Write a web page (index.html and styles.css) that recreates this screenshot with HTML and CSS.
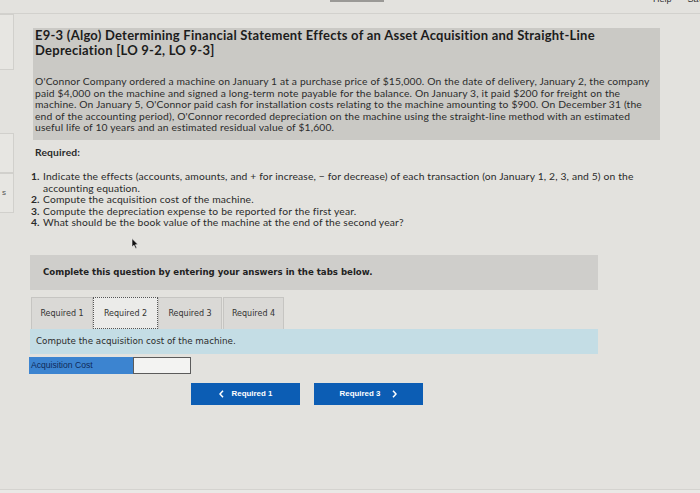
FILE: index.html
```html
<!DOCTYPE html>
<html>
<head>
<meta charset="utf-8">
<title>E9-3 (Algo)</title>
<link rel="stylesheet" href="styles.css">
</head>
<body>
<header class="topbar">
  <div class="topbar-tab"></div>
  <div class="topbar-links"><span>Help</span><span>Save</span></div>
</header>
<div class="page">
  <aside class="side">
    <div class="side-box side-box-1"></div>
    <div class="side-box side-box-2"></div>
    <div class="side-box side-box-3">s</div>
  </aside>
  <main class="main">
    <section class="intro">
      <h1 class="title"><span class="line">E9-3 (Algo) Determining Financial Statement Effects of an Asset Acquisition and Straight-Line</span><span class="line">Depreciation [LO 9-2, LO 9-3]</span></h1>
      <p class="desc"><span class="line">O'Connor Company ordered a machine on January 1 at a purchase price of $15,000. On the date of delivery, January 2, the company</span><span class="line">paid $4,000 on the machine and signed a long-term note payable for the balance. On January 3, it paid $200 for freight on the</span><span class="line">machine. On January 5, O'Connor paid cash for installation costs relating to the machine amounting to $900. On December 31 (the</span><span class="line">end of the accounting period), O'Connor recorded depreciation on the machine using the straight-line method with an estimated</span><span class="line">useful life of 10 years and an estimated residual value of $1,600.</span></p>
    </section>
    <p class="req-head">Required:</p>
    <ol class="req-list">
      <li class="req-item"><span class="num">1.</span><span class="txt"><span class="line">Indicate the effects (accounts, amounts, and + for increase, &minus; for decrease) of each transaction (on January 1, 2, 3, and 5) on the</span><span class="line">accounting equation.</span></span></li>
      <li class="req-item"><span class="num">2.</span><span class="txt">Compute the acquisition cost of the machine.</span></li>
      <li class="req-item"><span class="num">3.</span><span class="txt">Compute the depreciation expense to be reported for the first year.</span></li>
      <li class="req-item"><span class="num">4.</span><span class="txt">What should be the book value of the machine at the end of the second year?</span></li>
    </ol>
    <div class="cursor-row">
      <svg class="cursor" width="8" height="11" viewBox="0 0 8 11"><path d="M1 0.5 L1 9 L3 7.2 L4.6 10.5 L5.9 9.9 L4.4 6.7 L7 6.6 Z" fill="#111" stroke="#f2f2f2" stroke-width="0.6"/></svg>
    </div>
    <section class="question">
      <div class="complete">Complete this question by entering your answers in the tabs below.</div>
      <div class="tabs">
        <div class="tab tab-1">Required 1</div>
        <div class="tab tab-2 tab-active">Required 2</div>
        <div class="tab tab-3">Required 3</div>
        <div class="tab tab-4">Required 4</div>
      </div>
      <div class="instr">Compute the acquisition cost of the machine.</div>
      <div class="answer-row">
        <div class="answer-label">Acquisition Cost</div>
        <div class="answer-input"></div>
      </div>
      <div class="nav">
        <div class="nav-btn"><svg class="chev" width="5" height="8" viewBox="0 0 5 8"><polyline points="4,0.8 1,4 4,7.2" fill="none" stroke="#fff" stroke-width="1.5"/></svg><span>Required 1</span></div>
        <div class="nav-btn nav-btn-next"><span>Required 3</span><svg class="chev" width="5" height="8" viewBox="0 0 5 8"><polyline points="1,0.8 4,4 1,7.2" fill="none" stroke="#fff" stroke-width="1.5"/></svg></div>
      </div>
    </section>
  </main>
</div>
<footer class="footer"></footer>
</body>
</html>
```
FILE: styles.css
```css
html, body {
  margin: 0;
  padding: 0;
}
body {
  width: 700px;
  height: 493px;
  overflow: hidden;
  background: #e3e2de;
  font-family: "Lato", "Liberation Sans", sans-serif;
  color: #2a2a2a;
}
.topbar {
  height: 13px;
  border-bottom: 1px solid #d2d1cd;
  display: flex;
  justify-content: space-between;
  align-items: flex-start;
  overflow: hidden;
}
.topbar-tab {
  margin-left: 330px;
  width: 54px;
  height: 2px;
  background: #9a9996;
}
.topbar-links {
  display: flex;
  gap: 16px;
  margin-top: -6px;
  margin-right: -8px;
  font-family: "Liberation Sans", sans-serif;
  font-size: 9px;
  line-height: 10px;
  color: #333;
}
.page {
  display: flex;
}
.side {
  width: 14px;
  flex: none;
  display: flex;
  flex-direction: column;
}
.side-box {
  border: 1px solid #d1d0cc;
  border-left: none;
  background: #e7e6e2;
  box-sizing: border-box;
}
.side-box-1 {
  height: 56px;
}
.side-box-2 {
  margin-top: 63px;
  height: 40px;
}
.side-box-3 {
  height: 40px;
  font-family: "Liberation Sans", sans-serif;
  font-size: 8px;
  color: #555;
  padding: 14px 0 0 2px;
}
.main {
  margin-left: 19px;
  flex: 1;
}
.line {
  display: block;
  white-space: nowrap;
}
.intro {
  margin-top: 14px;
  width: 627px;
  background: #cac9c5;
  padding: 0 0 6px 2px;
  box-sizing: border-box;
}
.title {
  margin: 0;
  font-size: 13px;
  line-height: 15px;
  font-weight: 700;
  letter-spacing: 0.25px;
  color: #1c1c1c;
}
.desc {
  margin: 18px 0 0;
  font-size: 10.3px;
  line-height: 11.6px;
  letter-spacing: 0.15px;
  color: #2c2c2c;
}
.req-head {
  margin: 6px 0 0 2px;
  font-size: 10.3px;
  line-height: 12px;
  font-weight: 700;
  letter-spacing: 0.15px;
}
.req-list {
  list-style: none;
  margin: 13px 0 0;
  padding: 0;
  font-size: 10.3px;
  line-height: 11.6px;
  letter-spacing: 0.15px;
}
.req-item {
  display: flex;
}
.num {
  width: 12px;
  margin-left: -2px;
  flex: none;
  font-weight: 700;
}
.cursor-row {
  height: 26px;
  padding-top: 9px;
  box-sizing: border-box;
}
.cursor {
  display: block;
  margin-left: 98px;
}
.question {
  margin-left: -3px;
  width: 568px;
  font-family: "DejaVu Sans", "Verdana", sans-serif;
}
.complete {
  height: 35px;
  background: #cfcecb;
  padding-left: 13px;
  box-sizing: border-box;
  font-size: 8.6px;
  font-weight: 700;
  line-height: 35px;
  color: #222;
}
.tabs {
  margin-top: 7px;
  display: flex;
  padding-left: 1px;
}
.tab {
  height: 32px;
  box-sizing: border-box;
  text-align: center;
  line-height: 31px;
  font-size: 8px;
  color: #333;
  background: #dad9d6;
  border: 1px solid #c6c5c2;
  border-bottom: none;
}
.tab-1 {
  width: 62px;
}
.tab-2 {
  width: 65px;
}
.tab-3 {
  width: 64px;
}
.tab-4 {
  width: 61px;
  margin-left: 1px;
}
.tab-active {
  background: #ebebe9;
  border: 1px dotted #555;
}
.instr {
  height: 25px;
  background: #c4dde5;
  padding-left: 6px;
  box-sizing: border-box;
  line-height: 25px;
  font-size: 8.75px;
  color: #2b2b2b;
}
.answer-row {
  margin-top: 3px;
  display: flex;
  height: 17px;
}
.answer-label {
  width: 104px;
  margin-left: -1px;
  background: #3c84d0;
  padding-left: 2px;
  box-sizing: border-box;
  font-family: "Liberation Sans", sans-serif;
  font-size: 8.6px;
  line-height: 17px;
  color: #0f2a5a;
}
.answer-input {
  width: 58px;
  background: #f3f3f2;
  border: 1px solid #5b5b5b;
  box-sizing: border-box;
}
.nav {
  margin-top: 9px;
  margin-left: 161px;
  display: flex;
  gap: 14px;
}
.nav-btn {
  width: 109px;
  height: 22px;
  background: #0c5db4;
  display: flex;
  align-items: center;
  justify-content: center;
  gap: 8px;
  font-family: "Liberation Sans", sans-serif;
  font-size: 7.9px;
  font-weight: 700;
  color: #fff;
}
.nav-btn-next {
  gap: 12px;
}
.chev {
  display: block;
}
.footer {
  margin-top: 84px;
  height: 20px;
  border-top: 1px solid #d4d3cf;
  background: #eae9e6;
}
```
